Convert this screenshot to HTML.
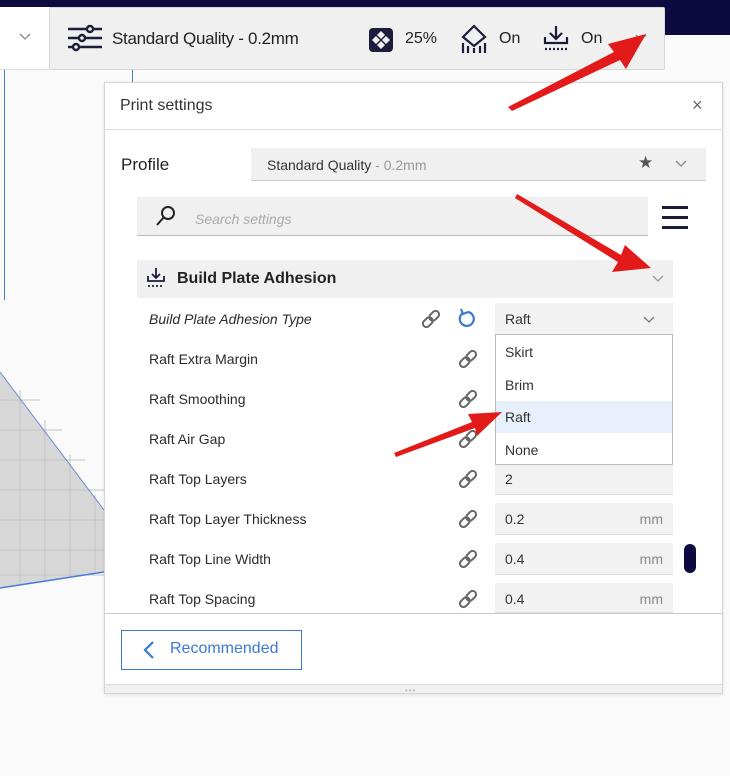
<!DOCTYPE html>
<html><head><meta charset="utf-8"><style>
*{box-sizing:border-box;margin:0;padding:0}
body{width:730px;height:776px;background:#fafafa;position:relative;overflow:hidden;font-family:"Liberation Sans","DejaVu Sans",sans-serif;color:#222}
.a{position:absolute}
.row{position:absolute;left:149px;font-size:14px;color:#2a2a2a}
.inp{position:absolute;left:495px;width:178px;height:32px;background:#f2f2f2;border-bottom:1px solid #ddd;font-size:14px;padding:8px 10px;color:#333}
.inp span{position:absolute;right:10px;top:8px;color:#888}
</style></head><body>
<div class="a" style="left:0;top:0;width:730px;height:7px;background:#0c0a3e"></div>
<div class="a" style="left:660px;top:0;width:70px;height:35px;background:#0c0a3e"></div>
<div class="a" style="left:0;top:7px;width:49px;height:63px;background:#fff;border-bottom:1px solid #ddd"></div>
<svg class="a" style="left:18px;top:32px" width="14" height="10"><path d="M2 2l5 5 5-5" stroke="#888" fill="none" stroke-width="1.3"/></svg>
<div class="a" style="left:4px;top:70px;width:1px;height:230px;background:#4a7bd8"></div>
<div class="a" style="left:132px;top:70px;width:1px;height:12px;background:#4a7bd8"></div>
<svg class="a" style="left:0;top:360px" width="104" height="240"><polygon points="0,12 104,150 104,212 0,228" fill="#d7d7d7"/><g stroke="#c4c4c4" stroke-width="1"><path d="M0 40H40M0 70H62M0 100H85M0 130H104M0 160H104M0 190H104M0 215H104M20 30V225M45 60V222M70 95V218M95 135V214"/></g><path d="M0 12L104 150" stroke="#6b8bd0"/><path d="M0 228L104 212" stroke="#4a7bd8" stroke-width="1.5"/></svg>
<div class="a" style="left:49px;top:7px;width:616px;height:63px;background:#f0f0f0;border:1px solid #d8d8d8;border-radius:2px"></div>
<svg class="a" style="left:68px;top:24px" width="34" height="30" stroke="#1c1c3c" stroke-width="2.4" fill="none"><path d="M0 5H34M0 14H34M0 23H34"/><circle cx="22" cy="5" r="3" fill="#f0f0f0"/><circle cx="14" cy="14" r="3" fill="#f0f0f0"/><circle cx="8" cy="23" r="3" fill="#f0f0f0"/></svg>
<div class="a" style="left:112px;top:29px;font-size:17px;color:#222;letter-spacing:-0.3px">Standard Quality - 0.2mm</div>
<svg class="a" style="left:368px;top:27px" width="26" height="26"><rect x="1" y="1" width="24" height="24" rx="4" fill="#1c1c3c"/><g fill="#f0f0f0"><path d="M13 4l4 4-4 4-4-4zM13 14l4 4-4 4-4-4zM8 9l4 4-4 4-4-4zM18 9l4 4-4 4-4-4z"/></g></svg>
<div class="a" style="left:405px;top:30px;font-size:16px">25%</div>
<svg class="a" style="left:460px;top:24px" width="28" height="30" fill="none" stroke="#1c1c3c" stroke-width="2.2"><path d="M14 2L25 13 14 22 3 13Z"/><path d="M3 19V29M8 22V29M14 24V29M20 22V29M25 19V29"/></svg>
<div class="a" style="left:499px;top:30px;font-size:16px">On</div>
<svg class="a" style="left:543px;top:25px" width="26" height="28" fill="none" stroke="#1c1c3c" stroke-width="2.2"><path d="M13 1V14M7 8l6 6 6-6M2 12V18H24V12"/><path d="M2 24H24" stroke-dasharray="2 2"/></svg>
<div class="a" style="left:581px;top:30px;font-size:16px">On</div>
<svg class="a" style="left:634px;top:33px" width="14" height="10"><path d="M2 2l5 5 5-5" stroke="#888" fill="none" stroke-width="1.3"/></svg>

<div class="a" style="left:104px;top:82px;width:619px;height:612px;background:#fff;border:1px solid #d5d5d5;box-shadow:0 1px 3px rgba(0,0,0,.1)"></div>
<div class="a" style="left:104px;top:129px;width:619px;height:1px;background:#ddd"></div>
<div class="a" style="left:120px;top:97px;font-size:16px;color:#333">Print settings</div>
<div class="a" style="left:692px;top:95px;font-size:18px;color:#666">×</div>
<div class="a" style="left:121px;top:155px;font-size:17px;color:#222">Profile</div>
<div class="a" style="left:251px;top:148px;width:455px;height:33px;background:#f0f0f0;border-bottom:1px solid #ccc"></div>
<div class="a" style="left:267px;top:157px;font-size:14px;color:#333">Standard Quality <span style="color:#999">- 0.2mm</span></div>
<div class="a" style="left:638px;top:153px;font-size:17px;color:#555">★</div>
<svg class="a" style="left:674px;top:159px" width="14" height="10"><path d="M2 2l5 5 5-5" stroke="#888" fill="none" stroke-width="1.3"/></svg>
<div class="a" style="left:137px;top:197px;width:511px;height:39px;background:#f0f0f0;border-bottom:1px solid #bbb"></div>
<svg class="a" style="left:155px;top:205px" width="22" height="22" fill="none" stroke="#222" stroke-width="2"><circle cx="13" cy="8" r="6"/><path d="M9 12L2 20"/></svg>
<div class="a" style="left:195px;top:211px;font-size:14px;color:#aaa;font-style:italic">Search settings</div>
<div class="a" style="left:662px;top:206px;width:26px;height:3px;background:#1c1c3c"></div>
<div class="a" style="left:662px;top:216px;width:26px;height:3px;background:#1c1c3c"></div>
<div class="a" style="left:662px;top:226px;width:26px;height:3px;background:#1c1c3c"></div>
<div class="a" style="left:137px;top:260px;width:536px;height:38px;background:#f0f0f0"></div>
<svg class="a" style="left:146px;top:267px" width="20" height="22" fill="none" stroke="#1c1c3c" stroke-width="1.8"><path d="M10 1V11M6 7l4 4 4-4M2 9V14H18V9"/><path d="M2 19H18" stroke-dasharray="2 2"/></svg>
<div class="a" style="left:177px;top:270px;font-size:16px;font-weight:bold;color:#222">Build Plate Adhesion</div>
<svg class="a" style="left:651px;top:274px" width="14" height="10"><path d="M2 2l5 5 5-5" stroke="#999" fill="none" stroke-width="1.3"/></svg>

<div class="row" style="top:311px;font-style:italic">Build Plate Adhesion Type</div>
<div class="row" style="top:351px">Raft Extra Margin</div>
<div class="row" style="top:391px">Raft Smoothing</div>
<div class="row" style="top:431px">Raft Air Gap</div>
<div class="row" style="top:471px">Raft Top Layers</div>
<div class="row" style="top:511px">Raft Top Layer Thickness</div>
<div class="row" style="top:551px">Raft Top Line Width</div>
<div class="row" style="top:591px">Raft Top Spacing</div>

<svg class="a" style="left:0;top:0" width="730" height="776" fill="none" stroke="#666" stroke-width="2">
<defs><g id="l"><g transform="rotate(-45)"><rect x="-10" y="-3.5" width="11" height="7" rx="3.5"/><rect x="-1" y="-3.5" width="11" height="7" rx="3.5"/></g></g></defs>
<use href="#l" x="431" y="319"/>
<use href="#l" x="468" y="359"/><use href="#l" x="468" y="399"/><use href="#l" x="468" y="439"/><use href="#l" x="468" y="479"/><use href="#l" x="468" y="519"/><use href="#l" x="468" y="559"/><use href="#l" x="468" y="599"/>
<path d="M463 313a7 7 0 1 0 5 -1" stroke="#3a78d6" stroke-width="2.2"/><path d="M461 309l2 5 5-2" stroke="#3a78d6" stroke-width="2.2"/>
</svg>

<div class="inp" style="top:303px">Raft</div>
<svg class="a" style="left:642px;top:315px" width="14" height="10"><path d="M2 2l5 5 5-5" stroke="#777" fill="none" stroke-width="1.3"/></svg>
<div class="inp" style="top:463px">2</div>
<div class="inp" style="top:503px">0.2<span>mm</span></div>
<div class="inp" style="top:543px">0.4<span>mm</span></div>
<div class="inp" style="top:583px;height:30px">0.4<span>mm</span></div>
<div class="a" style="left:495px;top:334px;width:178px;height:131px;background:#fff;border:1px solid #bbb;font-size:14px;color:#333">
<div style="height:33px;padding:9px 9px">Skirt</div>
<div style="height:33px;padding:9px 9px">Brim</div>
<div style="height:32px;padding:8px 9px;background:#e8f0fb">Raft</div>
<div style="height:33px;padding:9px 9px">None</div>
</div>
<div class="a" style="left:684px;top:544px;width:12px;height:29px;border-radius:6px;background:#0c0a3e"></div>
<div class="a" style="left:105px;top:613px;width:617px;height:1px;background:#ccc"></div>
<div class="a" style="left:121px;top:630px;width:181px;height:40px;border:1.5px solid #3a78d6;background:#fff"></div>
<svg class="a" style="left:142px;top:640px" width="14" height="20"><path d="M11 2L3 10l8 8" stroke="#3a78d6" fill="none" stroke-width="2.2"/></svg>
<div class="a" style="left:170px;top:640px;font-size:16px;color:#3a78d6">Recommended</div>
<div class="a" style="left:105px;top:684px;width:617px;height:9px;background:#f0f0f0;border-top:1px solid #ddd"></div>
<div class="a" style="left:405px;top:686px;font-size:8px;color:#bbb;letter-spacing:1px">•••</div>

<svg class="a" style="left:0;top:0" width="730" height="776" fill="#e21a1a">
<polygon points="508,107 614,52 608,44 646,34 626,69 620,60 512,111"/>
<polygon points="517,194 621,255 625,245 651,268 612,272 618,262 515,198"/>
<polygon points="394,453 472,422 468,414 502,412 477,436 475,428 396,457"/>
</svg>
</body></html>
